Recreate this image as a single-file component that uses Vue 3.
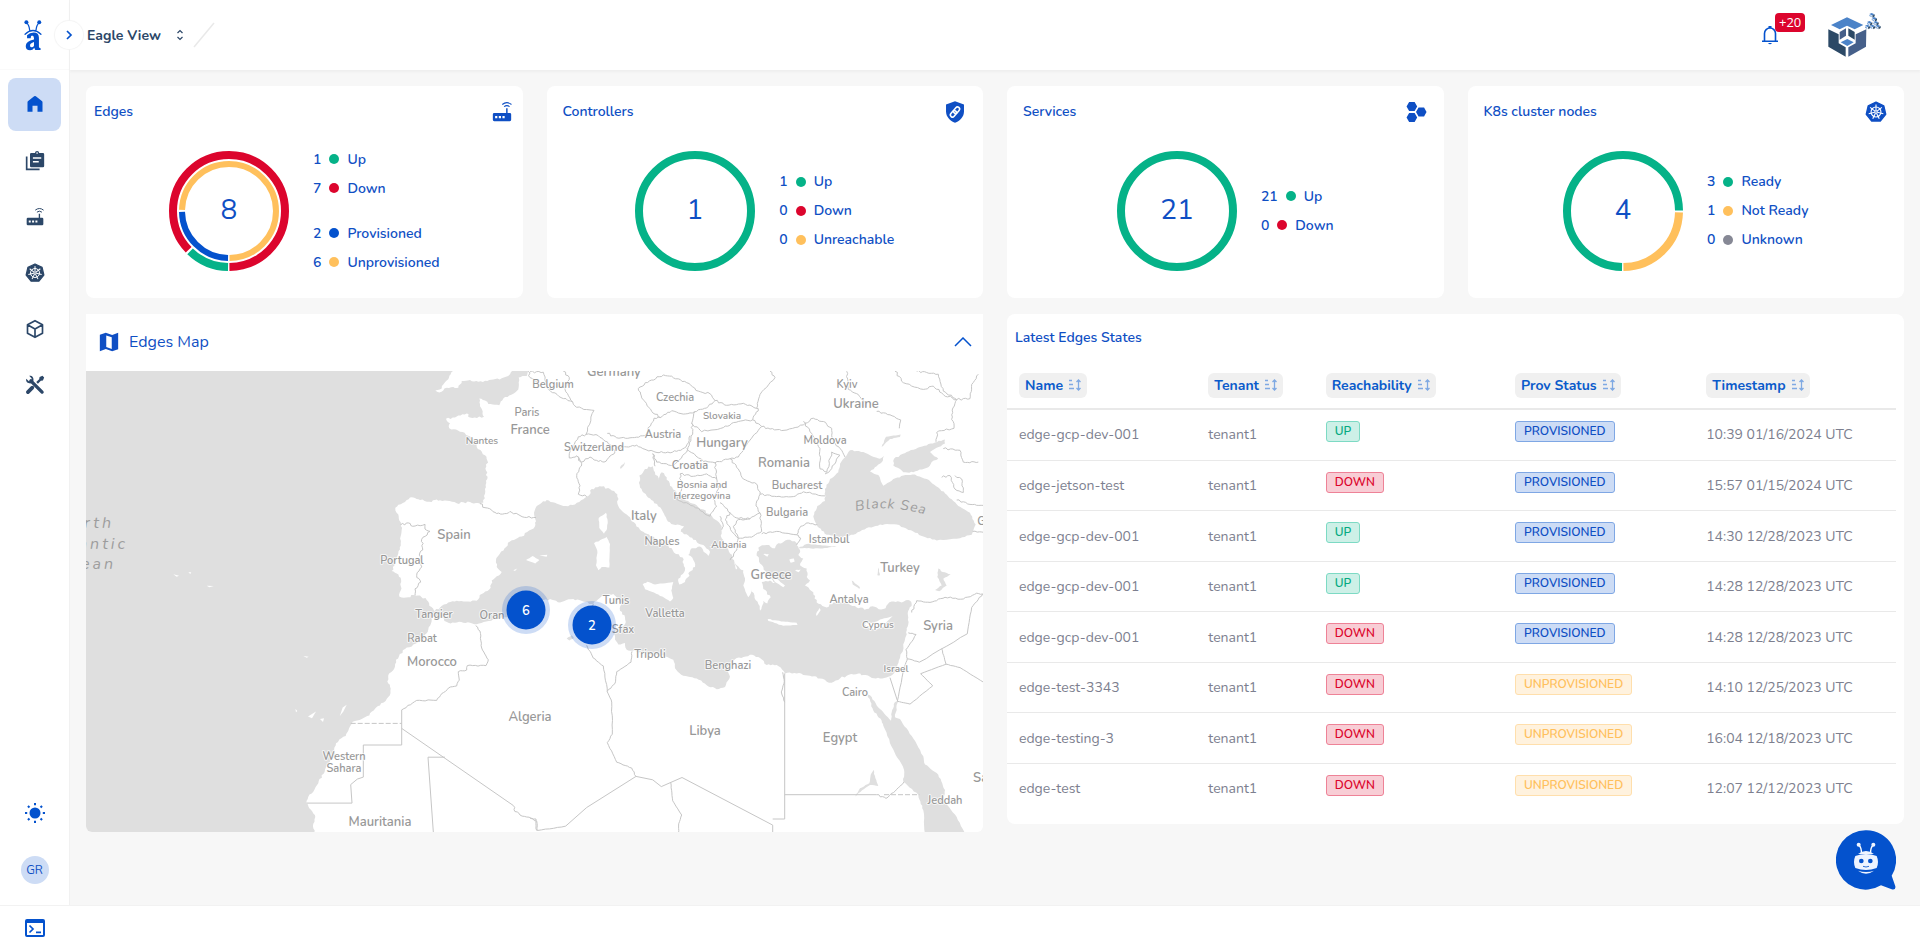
<script setup>
const navItems = [
  { icon: 'home', label: 'Home', active: true },
  { icon: 'clipboard', label: 'Templates' },
  { icon: 'router', label: 'Edges' },
  { icon: 'helm', label: 'Clusters' },
  { icon: 'box', label: 'Services' },
  { icon: 'tools', label: 'Tools' },
]

const green = '#05b288'
const red = '#dc052d'
const blue = '#0452cd'
const amber = '#ffc05c'
const grey = '#868895'

// Arc lengths are shares of a ring; every ring starts at six o'clock and runs clockwise.
const stats = [
  {
    title: 'Edges', icon: 'router', total: 8, tight: true,
    rings: [
      { r: 56, w: 8, parts: [[1, green], [7, red]] },
      { r: 47, w: 6, parts: [[2, blue], [6, amber]] },
    ],
    groups: [
      [[1, green, 'Up'], [7, red, 'Down']],
      [[2, blue, 'Provisioned'], [6, amber, 'Unprovisioned']],
    ],
  },
  {
    title: 'Controllers', icon: 'shield', total: 1,
    rings: [{ r: 56, w: 8, parts: [[1, green]] }],
    groups: [[[1, green, 'Up'], [0, red, 'Down'], [0, amber, 'Unreachable']]],
  },
  {
    title: 'Services', icon: 'hexes', total: 21,
    rings: [{ r: 56, w: 8, parts: [[21, green]] }],
    groups: [[[21, green, 'Up'], [0, red, 'Down']]],
  },
  {
    title: 'K8s cluster nodes', icon: 'helm', total: 4,
    rings: [{ r: 56, w: 8, parts: [[3, green], [1, amber]] }],
    groups: [[[3, green, 'Ready'], [1, amber, 'Not Ready'], [0, grey, 'Unknown']]],
  },
]

function arcs(ring) {
  const total = ring.parts.reduce((s, p) => s + p[0], 0)
  const len = 2 * Math.PI * ring.r
  const gap = ring.parts.length > 1 ? 2 : 0
  let at = 0
  return ring.parts.map(([n, color]) => {
    const part = (n / total) * len
    const arc = { color, dash: `${part - gap} ${len - part + gap}`, offset: -(at + gap / 2) }
    at += part
    return arc
  })
}

const columns = ['Name', 'Tenant', 'Reachability', 'Prov Status', 'Timestamp']
const rows = [
  ['edge-gcp-dev-001', 'UP', 'PROVISIONED', '10:39 01/16/2024 UTC'],
  ['edge-jetson-test', 'DOWN', 'PROVISIONED', '15:57 01/15/2024 UTC'],
  ['edge-gcp-dev-001', 'UP', 'PROVISIONED', '14:30 12/28/2023 UTC'],
  ['edge-gcp-dev-001', 'UP', 'PROVISIONED', '14:28 12/28/2023 UTC'],
  ['edge-gcp-dev-001', 'DOWN', 'PROVISIONED', '14:28 12/28/2023 UTC'],
  ['edge-test-3343', 'DOWN', 'UNPROVISIONED', '14:10 12/25/2023 UTC'],
  ['edge-testing-3', 'DOWN', 'UNPROVISIONED', '16:04 12/18/2023 UTC'],
  ['edge-test', 'DOWN', 'UNPROVISIONED', '12:07 12/12/2023 UTC'],
]

// Map outlines are stored on two survey grids; both are projected to map units.
const WEST = -6
const EAST = 444
function trace(shift, text, rough = 1, close = false) {
  const pts = text.trim().split(/\s+/).map((p) => {
    const [x, y] = p.split(',').map(Number)
    return [x / 3 + shift, y * 0.338 - 61]
  })
  if (close) pts.push(pts[0])
  let seed = 7
  const rand = () => {
    seed = (seed * 16807) % 2147483647
    return seed / 2147483647 - 0.5
  }
  const out = [pts[0]]
  for (let i = 1; i < pts.length; i++) {
    const [ax, ay] = pts[i - 1]
    const [bx, by] = pts[i]
    const d = Math.hypot(bx - ax, by - ay)
    const n = rough ? Math.min(6, Math.floor(d / 2.5)) : 0
    for (let k = 1; k <= n; k++) {
      const t = k / (n + 1)
      const j = rand() * 2 * rough
      out.push([ax + (bx - ax) * t - ((by - ay) / d) * j, ay + (by - ay) * t + ((bx - ax) / d) * j])
    }
    out.push([bx, by])
  }
  return 'M' + out.map((p) => p[0].toFixed(1) + ',' + p[1].toFixed(1)).join('L') + (close ? 'Z' : '')
}
const sea = (shift, text, rough) => trace(shift, text, rough, true)

const seas = [
  sea(WEST, '0,170 1118,170 1118,181 1112,190 1105,205 1090,220 1085,232 1066,238 1078,244 1090,238 1100,230 1120,228 1135,230 1145,210 1170,207 1195,212 1222,210 1240,206 1265,202 1290,190 1310,170 1345,170 1340,195 1316,200 1315,235 1300,248 1270,262 1258,282 1225,278 1215,268 1198,262 1200,285 1208,300 1212,316 1170,318 1160,306 1135,312 1125,318 1098,322 1110,335 1108,350 1140,360 1165,372 1185,385 1190,405 1215,430 1222,445 1218,475 1222,500 1215,530 1210,570 1200,573 1170,568 1130,572 1080,563 1065,562 1055,568 1020,562 1005,556 990,555 975,568 955,576 946,585 955,605 962,628 965,650 962,690 955,720 945,750 935,772 950,780 962,792 962,830 958,848 985,850 1000,843 1020,845 1040,858 1048,875 1062,890 1070,900 1055,915 1045,945 1030,975 1000,990 975,1003 948,1035 945,1055 925,1080 925,1105 932,1120 925,1145 900,1170 885,1180 868,1200 845,1210 818,1218 805,1245 797,1260 768,1282 762,1320 735,1360 715,1400 700,1425 685,1440 680,1460 685,1468 700,1490 706,1500 700,1520 706,1560 0,1560'),
  sea(EAST, '-290,890 -285,890 -270,880 -245,865 -220,860 -185,862 -160,860 -145,840 -118,822 -115,800 -85,775 -100,760 -102,740 -90,720 -60,685 -25,670 15,640 18,625 12,600 20,580 35,570 50,562 75,570 100,580 135,575 160,560 175,550 185,530 215,522 240,530 262,545 265,580 290,605 305,625 330,650 350,662 375,675 400,690 425,705 438,722 458,732 465,770 445,795 448,812 465,805 475,790 478,775 495,760 490,740 475,725 485,705 510,700 535,728 540,715 525,700 490,680 452,655 462,640 430,635 410,620 395,590 370,565 350,550 330,525 328,490 345,470 368,462 375,480 387,505 395,480 410,495 420,520 450,550 480,570 520,590 555,620 575,640 575,675 585,700 600,720 612,740 620,755 640,770 645,800 640,815 655,850 665,825 685,870 690,890 700,860 712,868 722,850 700,825 695,805 720,800 735,808 715,785 690,750 680,720 690,700 710,695 735,705 745,690 780,680 800,690 810,710 805,725 820,735 810,755 830,765 830,790 840,800 825,815 850,835 860,865 890,880 910,865 950,865 980,880 1010,885 1020,878 1060,885 1085,862 1115,865 1135,858 1145,870 1135,890 1135,930 1130,960 1110,1030 1095,1070 1075,1085 1050,1090 1020,1085 1000,1080 985,1075 950,1082 930,1090 905,1103 870,1090 840,1082 800,1075 765,1075 740,1050 710,1050 690,1030 660,1020 620,1030 590,1060 600,1085 585,1115 560,1122 530,1110 500,1090 460,1082 435,1060 430,1035 400,1020 370,1018 305,1008 290,1005 285,985 265,990 255,975 250,950 285,930 285,910 270,890 275,870 250,840 220,845 200,860 190,870 160,862 130,855 90,865 60,855 30,862 0,866 -30,880 -60,905 -110,915 -160,930 -200,925 -245,925 -265,910 -285,912'),
  sea(EAST, '960,415 1000,420 1020,430 1050,440 1062,432 1056,450 1040,462 1020,478 1045,488 1060,520 1090,500 1120,490 1155,487 1190,500 1230,530 1265,560 1285,580 1320,600 1337,635 1325,665 1290,675 1220,682 1180,670 1150,655 1100,635 1050,635 1010,645 970,665 930,672 890,665 862,640 850,610 862,580 885,565 885,530 900,500 925,480 930,455', 0.6),
  sea(EAST, '1092,440 1130,420 1170,405 1215,392 1245,383 1245,395 1200,420 1225,440 1205,450 1195,465 1150,480 1120,480 1110,470 1090,460', 0.6),
  sea(EAST, '805,705 830,692 870,695 920,700 870,706 830,705', 0.4),
  sea(EAST, '1013,1138 1025,1145 1040,1170 1060,1190 1083,1215 1085,1190 1095,1160 1104,1155 1095,1205 1110,1210 1145,1260 1180,1320 1185,1345 1225,1375 1245,1420 1240,1450 1280,1500 1312,1560 1185,1560 1180,1480 1165,1435 1120,1395 1122,1360 1090,1300 1060,1230 1055,1215 1030,1185', 0.6),
  sea(EAST, '1030,1360 1036,1385 1045,1408 1020,1405 985,1430 972,1445 990,1415 1018,1400 1022,1375', 0.4),
  sea(EAST, '1225,765 1238,775 1262,782 1240,795 1250,815 1228,832 1215,828 1235,815 1222,790', 0.5),
  sea(EAST, '1055,405 1068,375 1112,368 1110,376 1080,382', 0.4),
  sea(EAST, '1045,762 1050,785 1042,785', 0.3),
  sea(EAST, '965,800 990,820 988,825 968,812', 0.3),
  sea(EAST, '270,465 285,450 282,460 272,470', 0.2),
  sea(EAST, '110,972 125,962 132,970 118,978', 0.3),
]

const islands = [
  sea(EAST, '228,600 233,625 231,648 222,662 208,645 206,615', 0.4),
  sea(EAST, '192,690 230,672 240,692 238,762 215,760 205,770 198,755 202,712', 0.4),
  sea(EAST, '338,812 352,804 375,812 430,805 424,830 430,852 420,862 385,842 345,826', 0.4),
  sea(EAST, '-12,740 8,728 28,740 16,750', 0.2),
  sea(EAST, '28,726 52,724 50,730', 0),
  sea(EAST, '-50,770 -38,765 -45,772', 0),
  sea(EAST, '713,914 735,918 760,922 800,925 803,932 760,934 715,920', 0.4),
  sea(EAST, '1003,928 1030,926 1050,916 1088,906 1068,926 1065,936 1035,946 1010,940', 0.4),
  sea(EAST, '858,900 868,882 872,888 860,905', 0.2),
  sea(EAST, '720,780 765,815 760,820 735,805', 0.4),
  sea(EAST, '795,770 812,768 806,776', 0.2),
  sea(EAST, '778,738 792,735 794,744 782,748', 0.2),
  sea(EAST, '700,722 716,722 712,730', 0.2),
  sea(EAST, '612,745 622,765 618,768', 0.2),
  sea(WEST, '280,782 297,786 290,789', 0),
  sea(WEST, '325,776 334,776 331,781', 0),
  sea(WEST, '380,816 401,817 388,820', 0),
  sea(WEST, '670,1024 686,1026 680,1029', 0),
  sea(WEST, '646,1180 652,1186 648,1190', 0),
  sea(WEST, '684,1203 708,1188 696,1208', 0),
  sea(WEST, '720,1210 732,1208 729,1219', 0),
  sea(WEST, '779,1202 788,1176 800,1168 790,1188', 0),
]

const borders = [
  trace(WEST, '1200,573 1215,585 1235,592 1250,602 1280,602 1290,596 1320,608 1340,614 1368,614', 1.2),
  trace(WEST, '962,636 985,630 998,640 1035,634 1035,648 1050,655 1025,678 1028,710 1018,725 1025,760 1010,785 1022,805 1005,825 1005,845', 1.2),
  trace(WEST, '1187,934 1200,950 1205,1000 1225,1035 1218,1052 1162,1052 1160,1065 1135,1070 1138,1095 1130,1112 1112,1115 1085,1135 1070,1155 1010,1155 965,1183', 0.6),
  trace(WEST, '965,1183 965,1287 850,1287 850,1382 832,1388 812,1404 816,1459 680,1459', 0),
  trace(WEST, '965,1238 1300,1466', 0),
  trace(WEST, '1300,1466 1302,1478 1320,1494 1340,1500 1368,1506 1370,1540', 1),
  trace(WEST, '1095,1323 1044,1323 1061,1560', 0),
  trace(WEST, '1345,181 1350,200 1375,215', 1),
  trace(EAST, '0,1503 20,1512 22,1540 107,1527', 0.6),
  trace(EAST, '107,1527 170,1472 318,1380 368,1390 394,1410 456,1383 728,1524 728,1560', 0),
  trace(EAST, '422,1398 428,1452 455,1494 446,1520 446,1560', 0.2),
  trace(EAST, '728,1506 764,1506 764,1075', 0),
  trace(EAST, '764,1160 754,1130 763,1100 758,1072', 0.3),
  trace(EAST, '764,1434 1040,1434', 0),
  trace(EAST, '1040,1434 1068,1445 1100,1418 1122,1396', 0.8),
  trace(EAST, '318,1380 305,1355 260,1338 232,1280 247,1255 245,1160 232,1130 220,1053 190,1030 170,992', 0.5),
  trace(EAST, '232,1128 255,1105 260,1070 303,1042 306,1010', 0.5),
  trace(EAST, '190,870 170,900 172,950', 0.6),
  trace(EAST, '0,183 40,184 55,235 100,262 128,272 140,288 192,297 168,368', 1),
  trace(EAST, '100,181 118,200 105,235 128,272', 1),
  trace(EAST, '168,368 145,375 118,425 118,438 140,432 155,450 180,435 200,445 222,450 240,432 255,420 232,390 205,372 168,368', 1),
  trace(EAST, '232,365 260,378 300,378 345,372 372,320 392,318', 1),
  trace(EAST, '140,432 155,455 140,490 150,520 145,545 170,552', 1),
  trace(EAST, '255,410 290,405 320,400 345,412 375,420 400,422 440,418 468,405 480,372', 1),
  trace(EAST, '392,318 365,300 335,260 325,232 358,210 400,192 425,196 470,215 505,240 540,248 555,268 535,285 500,300 460,308 425,298 392,318', 1),
  trace(EAST, '555,268 590,282 640,276 685,292 668,325 625,330 580,348 515,360 485,335 495,300', 1),
  trace(EAST, '485,335 488,360 478,400 470,420', 1),
  trace(EAST, '668,325 695,345 660,385 625,435 600,440 555,452 520,448 470,410', 0.8),
  trace(EAST, '368,425 380,450 430,460 470,420', 1),
  trace(EAST, '368,425 375,462', 0.6),
  trace(EAST, '695,345 720,352 762,356 820,340 850,320 880,330 905,350 910,390 930,410 945,435', 1),
  trace(EAST, '820,330 845,365 870,410 870,470 890,480 905,420 930,430 900,475 885,485', 1),
  trace(EAST, '720,181 735,200 690,250 680,290', 0.8),
  trace(EAST, '450,485 490,492 530,485 560,500 565,530 550,560 560,580 540,610', 1),
  trace(EAST, '450,485 455,530 440,560 490,580 540,610', 1),
  trace(EAST, '555,452 560,500', 1),
  trace(EAST, '600,440 625,470 640,500 680,515 690,545 678,580 690,600 660,618 620,615 600,600 570,570', 1),
  trace(EAST, '690,545 740,552 790,552 820,538 885,550', 0.8),
  trace(EAST, '690,600 695,655 665,672 625,675 610,640 625,620 660,618', 0.8),
  trace(EAST, '695,662 740,655 800,665 812,640 835,630 862,635', 0.8),
  trace(EAST, '800,665 812,675 800,695', 0.6),
  trace(EAST, '570,610 580,640 575,650', 0.6),
  trace(EAST, '600,600 585,620 610,660 625,675 620,710 600,740', 1),
  trace(EAST, '1095,181 1120,215 1180,235 1210,225 1240,250 1280,265 1265,310 1272,350 1220,362 1218,390', 1.2),
  trace(EAST, '1160,181 1190,185 1225,190 1240,240 1280,265', 1),
  trace(EAST, '1280,265 1320,262 1325,220 1345,190', 1),
  trace(EAST, '1235,495 1260,490 1275,530 1300,540 1295,500 1275,490', 1),
  trace(EAST, '1240,410 1290,415 1300,450 1345,450', 1),
  trace(EAST, '1280,562 1320,575 1360,578', 0.8),
  trace(EAST, '1328,655 1362,658', 0.4),
  trace(EAST, '1145,895 1160,860 1200,865 1245,850 1300,855 1340,838 1358,840', 0.8),
  trace(EAST, '1358,840 1325,880 1312,958 1168,1042 1132,1032 1128,1005 1158,960 1135,955', 0.5),
  trace(EAST, '1235,1002 1248,1048 1172,1076 1208,1112 1140,1166 1102,1158 1122,1060 1132,1032', 0.2),
  trace(EAST, '1248,1048 1290,1058 1362,1102', 0.2),
  trace(EAST, '1080,1088 1102,1155', 0),
  trace(EAST, '950,181 955,235 985,250 1010,280', 0.8),
  trace(EAST, '1040,300 1080,310 1112,325 1108,350', 0.8),
]
const dashedBorders = [
  trace(WEST, '812,1223 965,1223', 0),
  trace(EAST, '1062,1434 1168,1434', 0),
]

const labels = [
  ['Nantes', 396, 73, 's'], ['Paris', 441, 45, 'm'], ['France', 444, 63, 'l'],
  ['Spain', 368, 168, 'l'], ['Portugal', 316, 193, 'm'], ['Tangier', 348, 247, 'm'],
  ['Oran', 406, 248, 'm'], ['Rabat', 336, 271, 'm'], ['Morocco', 346, 295, 'l'],
  ['Algeria', 444, 350, 'l'], ['Western', 258, 389, 'm'], ['Sahara', 258, 401, 'm'],
  ['Mauritania', 294, 455, 'l'], ['Germany', 528, 5, 'l'], ['Belgium', 467, 17, 'm'],
  ['Czechia', 589, 30, 'm'], ['Slovakia', 636, 48, 's'], ['Kyiv', 761, 17, 'm'],
  ['Ukraine', 770, 37, 'l'], ['Austria', 577, 67, 'm'], ['Switzerland', 508, 80, 'm'],
  ['Hungary', 636, 76, 'l'], ['Moldova', 739, 73, 'm'], ['Romania', 698, 96, 'l'],
  ['Croatia', 604, 98, 'm'], ['Bosnia and', 616, 117, 's'], ['Herzegovina', 616, 128, 's'],
  ['Bucharest', 711, 118, 'm'], ['Bulgaria', 701, 145, 'm'], ['Italy', 558, 149, 'l'],
  ['Naples', 576, 174, 'm'], ['Albania', 643, 177, 's'], ['Istanbul', 743, 172, 'm'],
  ['Greece', 685, 208, 'l'], ['Turkey', 814, 201, 'l'], ['Antalya', 763, 232, 'm'],
  ['Valletta', 579, 246, 'm'], ['Tunis', 530, 233, 'm'], ['Sfax', 537, 262, 'm'],
  ['Cyprus', 792, 257, 's'], ['Syria', 852, 259, 'l'], ['Tripoli', 564, 287, 'm'],
  ['Benghazi', 642, 298, 'm'], ['Israel', 810, 301, 's'], ['Cairo', 769, 325, 'm'],
  ['Libya', 619, 364, 'l'], ['Egypt', 754, 371, 'l'], ['Jeddah', 859, 433, 'm'],
  ['Georgia', 911, 154, 'm'], ['Saudi Arabia', 925, 411, 'l'],
]
const clusters = [[6, 440, 239], [2, 506, 254]]
const spokes = [0, 1, 2, 3, 4, 5, 6].map((i) => (i * 360) / 7)
</script>

<template>
  <div class="shell">
    <svg class="sprite" aria-hidden="true">
      <symbol id="home" viewBox="0 0 24 24"><path d="M3 20V8.800Q3 8 3.800 7.300L11 1.500q1-.8 2 0l7.200 5.800q.8.700.8 1.500V20h-6v-7H9v7z" fill="currentColor" /></symbol>
      <symbol id="clipboard" viewBox="0 0 24 24">
        <path d="M2 6.500V22h15.500" fill="none" stroke="currentColor" stroke-width="2" />
        <path fill-rule="evenodd" d="M7 2.500h5a2.500 2.500 0 0 1 5 0h4.500A1.500 1.500 0 0 1 23 4v14a1.500 1.500 0 0 1-1.500 1.500h-14A1.500 1.500 0 0 1 6 18V4a1.500 1.500 0 0 1 1-1.500zm7.500-1a1 1 0 1 0 0 2 1 1 0 0 0 0-2zM9.500 7.500v1.800h10V7.500zm0 4.500v1.800h7V12z" fill="currentColor" />
      </symbol>
      <symbol id="router" viewBox="0 0 24 24">
        <path fill-rule="evenodd" d="M3.500 13h13V8h1.600v5h2.400A1.500 1.500 0 0 1 22 14.500v6a1.500 1.500 0 0 1-1.500 1.500h-17A1.500 1.500 0 0 1 2 20.500v-6A1.500 1.500 0 0 1 3.500 13zm1 3.300v2.400h2.400v-2.400zm4 0v2.400h2.400v-2.400zm4 0v2.400h2.400v-2.400z" fill="currentColor" />
        <path d="M14.300 6.200q3-2.400 6 0M12.300 3.800q5-4 10 0" fill="none" stroke="currentColor" stroke-width="1.200" />
      </symbol>
      <symbol id="helm" viewBox="0 0 24 24">
        <path d="M12 1.200l8.500 4.100 2.100 9.100-5.900 7.400H7.300l-5.900-7.400 2.100-9.100z" fill="currentColor" stroke="currentColor" stroke-width="1.500" stroke-linejoin="round" />
        <g fill="none" stroke="#fff" stroke-width="1.200">
          <circle cx="12" cy="12" r="5.400" />
          <path v-for="a in spokes" :key="a" d="M12 10.500V3.800" :transform="`rotate(${a} 12 12)`" />
        </g>
        <circle cx="12" cy="12" r="1.900" fill="#fff" /><circle cx="12" cy="12" r=".8" fill="currentColor" />
      </symbol>
      <symbol id="box" viewBox="0 0 24 24"><path d="M12 2l9 5v10l-9 5-9-5V7zM3 7l9 5 9-5M12 12v10" fill="none" stroke="currentColor" stroke-width="2" stroke-linejoin="round" /></symbol>
      <symbol id="tools" viewBox="0 0 24 24">
        <path d="M7 7l13.500 13.500" stroke="currentColor" stroke-width="4" stroke-linecap="round" />
        <path d="M1.500 4.500l3.200 3 2.700-.6.600-2.700-3-3.200C8.500.5 11 3 10 7.500L7.500 10C4 10.500.5 8.500 1.500 4.500z" fill="currentColor" />
        <path d="M8.800 15.200l-5.300 5.300" stroke="currentColor" stroke-width="4.500" stroke-linecap="round" />
        <path d="M13.500 8.500L17 5l.5-2.500L21 1l2 2-1.500 3.500L19 7l-3.500 3.500z" fill="currentColor" />
      </symbol>
      <symbol id="shield" viewBox="0 0 24 24">
        <path d="M12 .2l9.800 3.600v7.700c0 5.500-4.200 10.300-9.800 12.300-5.600-2-9.800-6.800-9.800-12.300V3.800z" fill="currentColor" />
        <g fill="none" stroke="#fff" stroke-width="1.700" transform="rotate(-50 12 12)">
          <rect x="5.500" y="9.700" width="7.800" height="4.600" rx="2.300" /><rect x="10.700" y="9.700" width="7.800" height="4.600" rx="2.300" />
        </g>
      </symbol>
      <symbol id="hexes" viewBox="0 0 24 24"><path d="M4.500 1h6l2.800 5-2.800 5h-6L1.700 6zM4.500 13h6l2.800 5-2.800 5h-6l-2.800-5zM14.800 7h6l2.700 5-2.700 5h-6L12 12z" fill="currentColor" /></symbol>
      <symbol id="map" viewBox="0 0 24 24">
        <path fill-rule="evenodd" d="M2 4l6.500-2 7 2.400L22 2v18l-6.500 2-7-2.400L2 22zm7 .8v12.700l6 2V6.800z" fill="currentColor" />
      </symbol>
      <symbol id="sort" viewBox="0 0 13 12">
        <path d="M1 1.500h3M1 5.500h4M1 9.500h5M10.500 1v10M8.500 3l2-2 2 2M8.500 9l2 2 2-2" fill="none" stroke="currentColor" stroke-width="1.300" />
      </symbol>
    </svg>

    <aside class="side">
      <a class="brand" href="#" aria-label="Home page">
        <svg viewBox="0 0 54 94" width="18" height="31">
          <g fill="none" stroke="#0452cd" stroke-width="4" stroke-linecap="round">
            <path d="M7 9q8 4 10 22M46 9q-8 4-10 22M3 43q24-22 48 0" />
          </g>
          <circle cx="7" cy="7" r="6" fill="#0452cd" /><circle cx="46" cy="7" r="6" fill="#0452cd" />
          <path fill-rule="evenodd" d="M9 46q8-8 20-8 16 0 16 16v28q0 3 5 4v5H34q-2-3-3-7-5 8-13 8Q5 92 5 79q0-15 25-20v-4q0-8-6-8-4 0-4 8H9zm21 21q-12 4-12 10 0 6 5 6t7-5z" fill="#0452cd" />
        </svg>
      </a>
      <nav class="nav">
        <a v-for="n in navItems" :key="n.icon" href="#" :class="['nav-item', { active: n.active }]" :aria-label="n.label">
          <svg width="20" height="20"><use :href="'#' + n.icon" /></svg>
        </a>
      </nav>
      <div class="side-end">
        <button class="plain" aria-label="Light theme">
          <svg viewBox="0 0 22 22" width="22" height="22">
            <circle cx="11" cy="11" r="5.500" fill="#0452cd" />
            <path v-for="a in [0, 45, 90, 135, 180, 225, 270, 315]" :key="a" d="M11 1v2.200" stroke="#0452cd" stroke-width="2" :transform="`rotate(${a} 11 11)`" />
          </svg>
        </button>
        <button class="avatar">GR</button>
      </div>
    </aside>

    <header class="top">
      <button class="expand" aria-label="Expand menu">
        <svg viewBox="0 0 8 10" width="8" height="10"><path d="M2 1l4 4-4 4" fill="none" stroke="#0452cd" stroke-width="1.700" /></svg>
      </button>
      <button class="crumb">
        Eagle View
        <svg viewBox="0 0 8 12" width="8" height="12"><path d="M1.500 4L4 1.500 6.500 4M1.500 8L4 10.500 6.500 8" fill="none" stroke="#2c4768" stroke-width="1.200" /></svg>
      </button>
      <svg class="slash" viewBox="0 0 22 26" width="22" height="26"><path d="M1 25L21 1" stroke="#e9e9e9" stroke-width="1.500" /></svg>
      <button class="bell" aria-label="Notifications">
        <svg viewBox="0 0 18 20" width="18" height="20">
          <path d="M3.500 16V8.500a5.500 5.500 0 0 1 11 0V16M1 16.300h16" fill="none" stroke="#0452cd" stroke-width="1.600" />
          <path d="M7.500 1h3v2h-3zM7 18h4q-2 2.500-4 0z" fill="#0452cd" />
        </svg>
        <span class="count">+20</span>
      </button>
      <a class="tenant" href="#" aria-label="Tenant">
        <svg viewBox="320 36 165 138" width="55" height="46">
          <path d="M332 75l48-23 49 23-26 13-23-11-22 11z" fill="#4b83c8" />
          <path d="M324 88l31 15v27l21 12v28l-52-30z" fill="#2c4966" />
          <path d="M438 88l-32 15v27l-22 12v28l53-30z" fill="#46608a" />
          <path d="M358 96l19-11v22l-19 12z" fill="#46608a" /><path d="M384 85l19 11v23l-19-12z" fill="#2c4966" />
          <path d="M361 127l20-10 19 10-19 11z" fill="#4b83c8" />
          <g v-for="p in [[447, 40], [454, 52], [440, 64], [459, 64], [434, 75], [449, 75], [465, 75]]" :key="p.join()">
            <path :d="`M${p[0]} ${p[1] + 2}l7-3 8 4-6 4z`" fill="#4b83c8" />
            <path :d="`M${p[0]} ${p[1] + 4}l7 4v4l-7-4z`" fill="#7fa7d8" />
            <path :d="`M${p[0] + 9} ${p[1] + 7}l7-4v6l-6 4z`" fill="#2c4966" />
          </g>
        </svg>
      </a>
    </header>

    <main class="main">
      <section v-for="s in stats" :key="s.title" class="card stat">
        <div :class="['stat-head', { tight: s.tight }]">
          <h2>{{ s.title }}</h2>
          <svg width="22" height="22"><use :href="'#' + s.icon" /></svg>
        </div>
        <div class="stat-body">
          <svg class="donut" viewBox="0 0 120 120" width="120" height="120">
            <g v-for="ring in s.rings" :key="ring.r" transform="rotate(90 60 60)">
              <circle v-for="a in arcs(ring)" :key="a.color" cx="60" cy="60" :r="ring.r" fill="none" :stroke="a.color" :stroke-width="ring.w" :stroke-dasharray="a.dash" :stroke-dashoffset="a.offset" />
            </g>
            <text x="60" y="68" text-anchor="middle">{{ s.total }}</text>
          </svg>
          <div class="legend">
            <ul v-for="(g, i) in s.groups" :key="i">
              <li v-for="l in g" :key="l[2]">
                <span>{{ l[0] }}</span>
                <svg viewBox="0 0 10 10" width="10" height="10"><circle cx="5" cy="5" r="5" :fill="l[1]" /></svg>
                <span>{{ l[2] }}</span>
              </li>
            </ul>
          </div>
        </div>
      </section>

      <section class="card map-card">
        <div class="map-head">
          <svg width="22" height="22"><use href="#map" /></svg>
          <h2>Edges Map</h2>
          <button class="plain" aria-label="Collapse map">
            <svg viewBox="0 0 18 10" width="18" height="10"><path d="M1 9l8-8 8 8" fill="none" stroke="#0452cd" stroke-width="1.500" /></svg>
          </button>
        </div>
        <svg class="map" viewBox="0 0 897 461" preserveAspectRatio="xMidYMid slice">
          <path v-for="(d, i) in seas" :key="'s' + i" :d="d" fill="#dfdfdf" />
          <path v-for="(d, i) in islands" :key="'i' + i" :d="d" fill="#fff" />
          <g fill="none" stroke="#c6c6c6" stroke-width="1">
            <path v-for="(d, i) in borders" :key="'b' + i" :d="d" />
            <path v-for="(d, i) in dashedBorders" :key="'d' + i" :d="d" stroke-dasharray="5 2" />
          </g>
          <g class="ocean">
            <text x="28" y="157">North</text><text x="42" y="178">Atlantic</text><text x="30" y="198">Ocean</text>
          </g>
          <path id="black-sea" d="M770 140Q805 132 852 147" fill="none" />
          <text class="sea-name"><textPath href="#black-sea">Black Sea</textPath></text>
          <text v-for="l in labels" :key="l[0]" :x="l[1]" :y="l[2]" :class="['place', l[3]]">{{ l[0] }}</text>
          <g v-for="c in clusters" :key="c[0]">
            <circle :cx="c[1]" :cy="c[2]" r="24" fill="#0452cd" fill-opacity=".2" />
            <circle :cx="c[1]" :cy="c[2]" r="19.500" fill="#0452cd" />
            <text class="cluster" :x="c[1]" :y="c[2] + 5">{{ c[0] }}</text>
          </g>
        </svg>
      </section>

      <section class="card states">
        <h2>Latest Edges States</h2>
        <table>
          <colgroup><col class="c1" /><col class="c2" /><col class="c3" /><col class="c4" /><col class="c5" /></colgroup>
          <thead>
            <tr>
              <th v-for="c in columns" :key="c" scope="col">
                <button class="sort">{{ c }}<svg width="13" height="12"><use href="#sort" /></svg></button>
              </th>
            </tr>
          </thead>
          <tbody>
            <tr v-for="(r, i) in rows" :key="i">
              <td>{{ r[0] }}</td>
              <td>tenant1</td>
              <td class="tag-cell"><span :class="['tag', r[1].toLowerCase()]">{{ r[1] }}</span></td>
              <td class="tag-cell"><span :class="['tag', r[2].toLowerCase()]">{{ r[2] }}</span></td>
              <td>{{ r[3] }}</td>
            </tr>
          </tbody>
        </table>
      </section>
    </main>

    <footer class="foot">
      <button class="plain" aria-label="Terminal">
        <svg viewBox="0 0 20 18" width="20" height="18">
          <path fill-rule="evenodd" d="M2 0h16a2 2 0 0 1 2 2v14a2 2 0 0 1-2 2H2a2 2 0 0 1-2-2V2a2 2 0 0 1 2-2zm0 4v12h16V4z" fill="#0452cd" />
          <path d="M4.500 6.500L8 10l-3.500 3.500M11 13.300h5" fill="none" stroke="#0452cd" stroke-width="1.700" />
        </svg>
      </button>
    </footer>

    <button class="chat" aria-label="Chat assistant">
      <svg viewBox="0 0 180 180" width="60" height="60">
        <path d="M90 1a89 89 0 1 0 45 165l32 12q13 3 11-9l-11-32A89 89 0 0 0 90 1z" fill="#0452cd" />
        <g fill="none" stroke="#fff" stroke-width="4"><path d="M69 46q8 8 7 24M111 46q-8 8-7 24" /></g>
        <g fill="#eef4ff">
          <circle cx="68" cy="44" r="6" /><circle cx="112" cy="44" r="6" />
          <path d="M66 72q24-18 48 0zM58 78q32-12 64 0 8 18 0 36-32 12-64 0-8-18 0-36zM66 122q24 8 48 0-24 18-48 0z" />
        </g>
        <g fill="#0452cd"><circle cx="76" cy="93" r="7" /><circle cx="103" cy="93" r="7" /></g>
        <path d="M81 109q9 4 18 0" fill="none" stroke="#0452cd" stroke-width="2.500" />
      </svg>
    </button>
  </div>
</template>

<style>
body {
  margin: 0;
  background: #f7f7f7;
}
</style>

<style scoped>
.shell {
  display: grid;
  grid-template: 70px 1fr 40px / 70px 1fr;
  min-height: 100vh;
  box-sizing: border-box;
  font-family: Nunito, Lato, "Open Sans", sans-serif;
  font-size: 14px;
  color: #0f4fc4;
}
.sprite {
  position: absolute;
  width: 0;
  height: 0;
}
svg {
  display: block;
}
button {
  font: inherit;
  color: inherit;
  border: 0;
  padding: 0;
  background: none;
  cursor: pointer;
}
a {
  color: inherit;
}
h2 {
  margin: 0;
  font-size: 14px;
  line-height: 20px;
  font-weight: 600;
}
.side {
  grid-row: 1 / 3;
  display: flex;
  flex-direction: column;
  background: #fff;
  border-right: 1px solid #f1f1f1;
}
.brand {
  height: 70px;
  box-sizing: border-box;
  padding: 20px 0 0 24px;
  border-bottom: 1px solid #fafafa;
}
.nav {
  display: flex;
  flex-direction: column;
  gap: 3px;
  padding: 8px;
}
.nav-item {
  display: grid;
  place-items: center;
  height: 53px;
  border-radius: 8px;
  color: #2c4768;
}
.nav-item.active {
  background: #cddcf5;
  color: #0452cd;
}
.side-end {
  margin-top: auto;
  display: flex;
  flex-direction: column;
  align-items: center;
  gap: 32px;
  padding-bottom: 21px;
}
.avatar {
  width: 28px;
  height: 28px;
  border-radius: 50%;
  background: #cddcf5;
  font-size: 12px;
}
.top {
  display: flex;
  align-items: center;
  background: #fff;
  box-shadow: 0 2px 2px #eeeeee;
  padding-right: 38px;
  z-index: 1;
}
.expand {
  display: grid;
  place-items: center;
  width: 28px;
  height: 28px;
  margin-left: -15px;
  border-radius: 50%;
  background: #fff;
  box-shadow: 0 0 1px 1px #f4f4f4;
}
.crumb {
  display: flex;
  align-items: center;
  gap: 15px;
  margin-left: 4px;
  font-weight: 700;
  color: #2c4768;
}
.slash {
  margin-left: 9px;
}
.bell {
  position: relative;
  margin-left: auto;
}
.count {
  position: absolute;
  left: 14px;
  top: -12px;
  padding: 0 4px;
  border-radius: 4px;
  background: #dc052d;
  color: #fff;
  font: 13px/19px "Open Sans", sans-serif;
}
.tenant {
  margin-left: 48px;
}
.main {
  display: grid;
  grid-template-columns: repeat(4, 1fr);
  gap: 16px 24px;
  align-content: start;
  align-items: start;
  padding: 16px;
}
.card {
  background: #fff;
  border-radius: 8px;
}
.stat {
  min-height: 212px;
  display: flex;
  flex-direction: column;
}
.stat-head {
  display: flex;
  align-items: center;
  justify-content: space-between;
  padding: 15px 17px 0 16px;
}
.stat-head.tight {
  padding: 15px 10px 0 8px;
}
.stat-body {
  flex: 1;
  display: flex;
  align-items: center;
  justify-content: center;
  gap: 24px;
}
.donut text {
  font-size: 28px;
  fill: #0f4fc4;
}
.legend {
  display: flex;
  flex-direction: column;
  gap: 16px;
}
.legend ul {
  list-style: none;
  margin: 0;
  padding: 0;
}
.legend li {
  display: flex;
  align-items: center;
  gap: 8px;
  line-height: 29px;
  font-weight: 600;
}
.map-card {
  grid-column: span 2;
  border-radius: 0 0 6px 6px;
  overflow: hidden;
}
.map-head {
  display: flex;
  align-items: center;
  gap: 9px;
  height: 57px;
  box-sizing: border-box;
  padding: 0 11px 2px 12px;
}
.map-head h2 {
  flex: 1;
  font-size: 16px;
  font-weight: 400;
}
.map {
  width: 100%;
  height: auto;
}
.map text {
  text-anchor: middle;
}
.map .place {
  fill: #989898;
  stroke: #fff;
  stroke-opacity: .7;
  stroke-width: 2px;
  paint-order: stroke;
  font-size: 11px;
  font-weight: 600;
}
.map .place.s {
  font-size: 10px;
}
.map .place.l {
  font-size: 13px;
}
.map .ocean text {
  text-anchor: end;
}
.ocean,
.sea-name {
  font-size: 16px;
  font-style: italic;
  letter-spacing: 3px;
  fill: #9d9d9d;
}
.map .sea-name {
  text-anchor: start;
  font-size: 14px;
  letter-spacing: 1px;
}
.map .cluster {
  fill: #fff;
  font-size: 13px;
  font-weight: 600;
}
.states {
  grid-column: span 2;
  padding: 14px 8px 11px 0;
}
table {
  width: 100%;
  height: 451px;
  margin-top: 14px;
  border-collapse: collapse;
  table-layout: fixed;
}
.states h2 {
  padding-left: 8px;
}
.c1 { width: 21.3%; }
.c2 { width: 13.2%; }
.c3 { width: 21.3%; }
.c4 { width: 21.5%; }
th {
  height: 47px;
  padding: 0 12px;
  box-sizing: border-box;
  text-align: left;
  border-bottom: 2px solid #e9e9e9;
}
.sort {
  display: flex;
  align-items: center;
  gap: 5px;
  height: 25px;
  padding: 0 6px;
  border-radius: 6px;
  background: #f0f0f0;
  font-weight: 700;
  color: #0b5bcb;
  white-space: nowrap;
}
.sort svg {
  color: #7fa9e3;
}
td {
  padding: 0 12px;
  border-bottom: 1px solid #e9e9e9;
  color: #7d7f8f;
  white-space: nowrap;
}
tbody tr:last-child td {
  border-bottom: 0;
}
.tag-cell {
  vertical-align: top;
  padding-top: 11px;
}
.tag {
  display: block;
  width: max-content;
  border: 1px solid;
  border-radius: 3px;
  padding: 0 8px;
  font-size: 12px;
  line-height: 19px;
  font-weight: 600;
}
.up {
  color: #06aa80;
  background: #cdf0e7;
  border-color: #7ddac4;
}
.down {
  color: #dc052d;
  background: #f8cdd5;
  border-color: #ee8297;
}
.provisioned {
  color: #0f4fc4;
  background: #cddcf5;
  border-color: #7fa7e4;
}
.unprovisioned {
  color: #ffc05c;
  background: #fff2de;
  border-color: #ffdfac;
}
.foot {
  grid-column: 1 / 3;
  display: flex;
  align-items: center;
  padding: 5px 25px 0;
  background: #fff;
  border-top: 1px solid #f2f2f2;
  box-sizing: border-box;
}
.chat {
  position: fixed;
  right: 24px;
  bottom: 55px;
  z-index: 2;
}
</style>
